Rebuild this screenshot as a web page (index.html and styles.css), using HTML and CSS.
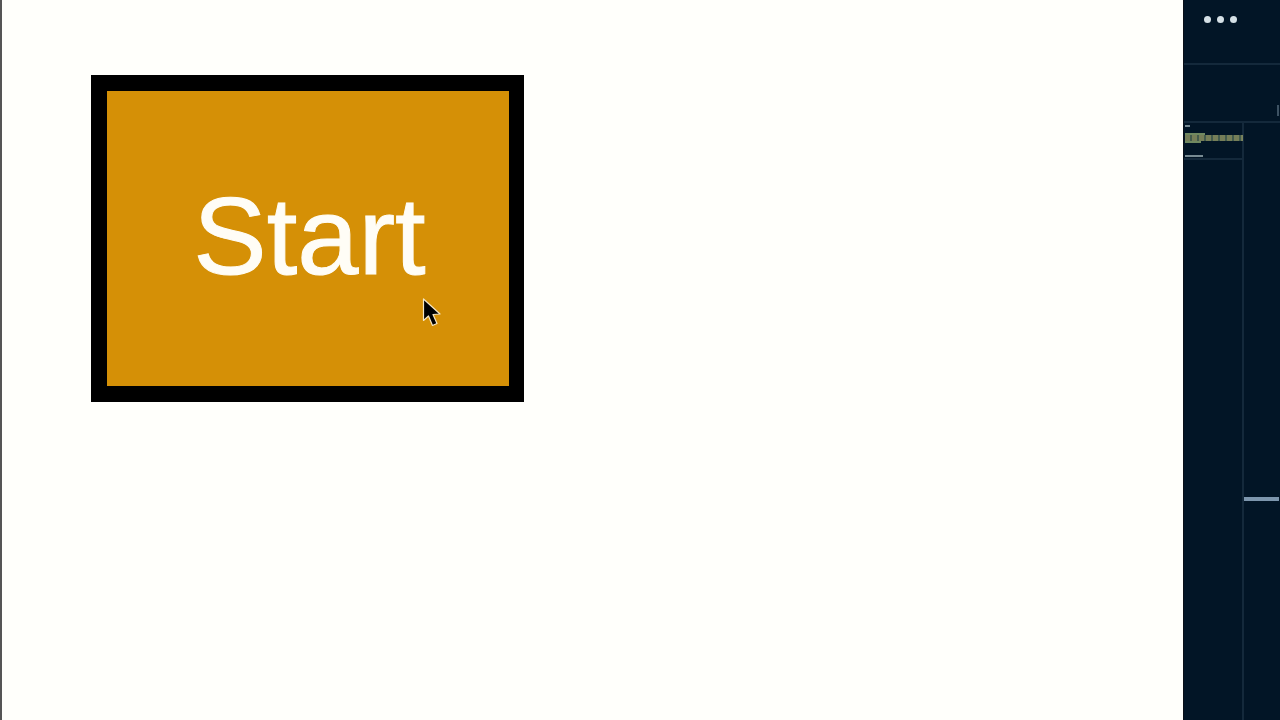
FILE: index.html
```html
<!DOCTYPE html>
<html lang="en">
<head>
<meta charset="utf-8">
<title>Start</title>
<link rel="stylesheet" href="styles.css">
</head>
<body>
<div class="app">
  <main class="stage">
    <button class="start" type="button">Start
      <svg class="cursor" width="20" height="30" viewBox="0 0 20 30" aria-hidden="true">
        <path d="M1.5 1 L1.5 22.5 L6.5 18 L10.5 27.5 L15 25.5 L11 16.5 L18 16 Z" fill="#000" stroke="#f6e7c4" stroke-width="1.2" stroke-linejoin="round"/>
      </svg>
    </button>
  </main>
  <aside class="panel">
    <div class="menu"><i class="dot"></i><i class="dot"></i><i class="dot"></i></div>
    <div class="band"><i class="tick"></i></div>
    <div class="split">
      <div class="log">
        <div class="logtext">
          <i class="ln w6 pale"></i>
          <i class="gap-s"></i>
          <i class="ln w22 green"></i>
          <i class="ln w58 yellow"></i>
          <i class="ln w58 yellow"></i>
          <i class="ln w58 yellow"></i>
          <i class="ln w18 green"></i>
          <i class="gap"></i>
          <i class="ln w20 pale"></i>
        </div>
      </div>
      <div class="scroll"><div class="thumb"></div></div>
    </div>
  </aside>
</div>
</body>
</html>
```
FILE: styles.css
```css
* { box-sizing: border-box; }
html, body { margin: 0; height: 100%; overflow: hidden; background: #fffffb; }
.app { display: flex; width: 1280px; height: 720px; background: #fffffb; }
.stage {
  flex: 1;
  padding: 75px 0 0 89px;
  border-left: 2px solid #555;
}
.start {
  position: relative;
  display: flex;
  align-items: center;
  justify-content: center;
  width: 433px;
  height: 327px;
  padding: 0 0 6px 3px;
  background: #d59006;
  border: 16px solid #000;
  border-right-width: 15px;
  color: #fffdf6;
  font: 110px/1 "Liberation Sans", Arial, sans-serif;
  -webkit-text-stroke: 1px #fffdf6;
  filter: blur(0.5px);
}
.cursor { position: absolute; left: 315px; top: 207px; }
.panel {
  width: 97px;
  display: flex;
  flex-direction: column;
  background: #021526;
  border-left: 1px solid #0a0f18;
}
.menu {
  height: 65px;
  flex: none;
  padding: 16px 0 0 20px;
  display: flex;
  gap: 6px;
  border-bottom: 2px solid #14293b;
}
.dot { width: 7px; height: 7px; border-radius: 50%; background: #d5e0e6; filter: blur(0.4px); }
.band { position: relative; height: 58px; flex: none; border-bottom: 2px solid #14293b; }
.tick { position: absolute; right: 1px; top: 40px; width: 2px; height: 11px; background: #3d5263; }
.split { flex: 1; display: flex; }
.log { width: 60px; border-right: 2px solid #14293b; }
.logtext {
  display: flex;
  flex-direction: column;
  gap: 0;
  height: 37px;
  padding: 2px 0 0 1px;
  border-bottom: 2px solid #14293b;
}
.ln { display: block; flex: none; height: 2px; opacity: .7; filter: blur(0.5px); }
.w6 { width: 5px; }
.w18 { width: 16px; }
.w20 { width: 18px; }
.w22 { width: 20px; }
.w58 { width: 58px; }
.gap { flex: none; height: 12px; }
.gap-s { flex: none; height: 6px; }
.pale { background: #a9bcc0; }
.green { background: #9fbb7a; }
.yellow { background: repeating-linear-gradient(90deg, #c2c47a 0 5px, #6f8a68 5px 7px); opacity: .6; }
.scroll { flex: 1; padding: 374px 1px 0 0; }
.thumb { height: 4px; background: #7d96ad; filter: blur(0.4px); }
```
